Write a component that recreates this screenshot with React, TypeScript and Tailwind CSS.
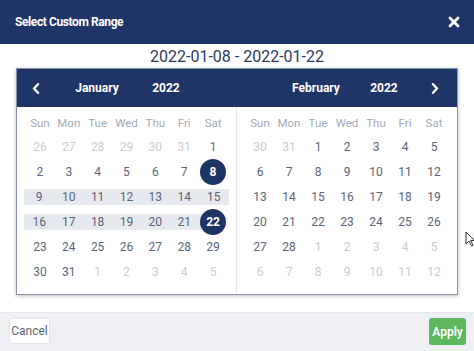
import React from "react";

type Cell = { d: number; muted?: boolean; sel?: boolean; band?: "full" | "left" };

const range = (a: number, b: number) => Array.from({ length: b - a + 1 }, (_, i) => a + i);

const jan: Cell[] = [
  ...range(26, 31).map((d) => ({ d, muted: true })),
  ...range(1, 31).map((d) => {
    const c: Cell = { d };
    if (d === 8 || d === 22) c.sel = true;
    if (d >= 9 && d <= 21) c.band = "full";
    if (d === 22) c.band = "left";
    return c;
  }),
  ...range(1, 5).map((d) => ({ d, muted: true })),
];

const feb: Cell[] = [
  ...range(30, 31).map((d) => ({ d, muted: true })),
  ...range(1, 28).map((d) => ({ d })),
  ...range(1, 12).map((d) => ({ d, muted: true })),
];

const days = ["Sun", "Mon", "Tue", "Wed", "Thu", "Fri", "Sat"];

function Chevron({ dir }: { dir: "l" | "r" }) {
  return (
    <svg width="8" height="11" viewBox="0 0 8 11" fill="none">
      <path
        d={dir === "l" ? "M6 1.2 L2 5.5 L6 9.8" : "M2 1.2 L6 5.5 L2 9.8"}
        stroke="white"
        strokeWidth="2.4"
        strokeLinecap="round"
        strokeLinejoin="round"
      />
    </svg>
  );
}

function DayCell({ c, col }: { c: Cell; col: number }) {
  const color = c.muted ? "text-[#c9ccd3]" : "text-[#5b6577]";
  let cls = "h-[25px] flex items-center justify-center";
  if (c.band === "full") {
    cls += " bg-[linear-gradient(#e6e9ee,#e6e9ee)] bg-no-repeat bg-center bg-[length:100%_16px]";
    if (col === 0) cls += " -ml-[1.5px]";
    if (col === 6) cls += " -mr-[1.5px]";
  }
  if (c.band === "left") {
    cls +=
      " bg-[linear-gradient(to_right,#e6e9ee_50%,transparent_50%)] bg-no-repeat bg-center bg-[length:100%_16px]";
  }
  return (
    <div className={cls}>
      {c.sel ? (
        <div className="w-[26px] h-[26px] rounded-full bg-[#1f3466] text-white font-bold flex items-center justify-center text-[12px]">
          {c.d}
        </div>
      ) : (
        <span className={`${color} text-[12px]`}>{c.d}</span>
      )}
    </div>
  );
}

function Month({ cells }: { cells: Cell[] }) {
  return (
    <div className="px-[8.5px] pt-[7px] pb-[10px]">
      <div className="grid grid-cols-7 h-[20px] items-center">
        {days.map((d) => (
          <div key={d} className="text-center text-[11.5px] text-[#a2a9b8]">
            {d}
          </div>
        ))}
      </div>
      <div className="grid grid-cols-7">
        {cells.map((c, i) => (
          <DayCell key={i} c={c} col={i % 7} />
        ))}
      </div>
    </div>
  );
}

export default function App() {
  return (
    <div className="relative w-[474px] h-[351px] bg-white overflow-hidden" style={{ fontFamily: "Roboto, 'Noto Sans', sans-serif" }}>
      <div className="h-[44px] bg-[#1f3467] flex items-center justify-between pl-[15px] pr-[14px]">
        <span className="text-white font-bold text-[12px] tracking-[-0.4px]">Select Custom Range</span>
        <svg width="12" height="12" viewBox="0 0 12 12">
          <path d="M2 2 L10 10 M10 2 L2 10" stroke="white" strokeWidth="2.8" strokeLinecap="round" />
        </svg>
      </div>
      <div className="h-[24px] flex items-center justify-center text-[16px] text-[#2b3a5c] pt-[2px]">
        2022-01-08 - 2022-01-22
      </div>
      <div className="mx-[16px] h-[227px] border border-[#8b92a7] shadow-[0_1px_4px_rgba(0,0,0,0.25)] flex flex-col">
        <div className="h-[40px] bg-[#1f3467] flex text-white font-bold text-[12px]">
          <div className="w-[220px] flex items-center">
            <div className="w-[38px] flex justify-center">
              <Chevron dir="l" />
            </div>
            <div className="w-[84px] text-center">January</div>
            <div className="w-[54px] text-center">2022</div>
          </div>
          <div className="flex-1 flex items-center">
            <div className="w-[38px]" />
            <div className="w-[82px] text-center">February</div>
            <div className="w-[54px] text-center">2022</div>
            <div className="flex-1 flex justify-center pl-[2px]">
              <Chevron dir="r" />
            </div>
          </div>
        </div>
        <div className="flex flex-1">
          <div className="w-[220px] border-r border-[#e3e5ea]">
            <Month cells={jan} />
          </div>
          <div className="flex-1">
            <Month cells={feb} />
          </div>
        </div>
      </div>
      <div className="mt-[17px] h-[39px] bg-[#eef0f4] border-t border-[#e4e7ec] flex items-start justify-between pl-[9px] pr-[8px] pt-[5px]">
        <button className="w-[41px] h-[26px] bg-white rounded-[3px] border border-[#e2e4e8] text-[12px] text-[#5f6570]">
          Cancel
        </button>
        <button className="w-[37px] h-[27px] bg-[#5cb85c] rounded-[3px] text-[12px] font-semibold text-white">
          Apply
        </button>
      </div>
      <svg className="absolute left-[465px] top-[231px]" width="10" height="16" viewBox="0 0 10 16">
        <path d="M1 1 L1 13 L4 10 L6.5 15 L8 14.3 L5.7 9.5 L9.5 9.5 Z" fill="white" stroke="#333" strokeWidth="1" strokeLinejoin="round" />
      </svg>
    </div>
  );
}
